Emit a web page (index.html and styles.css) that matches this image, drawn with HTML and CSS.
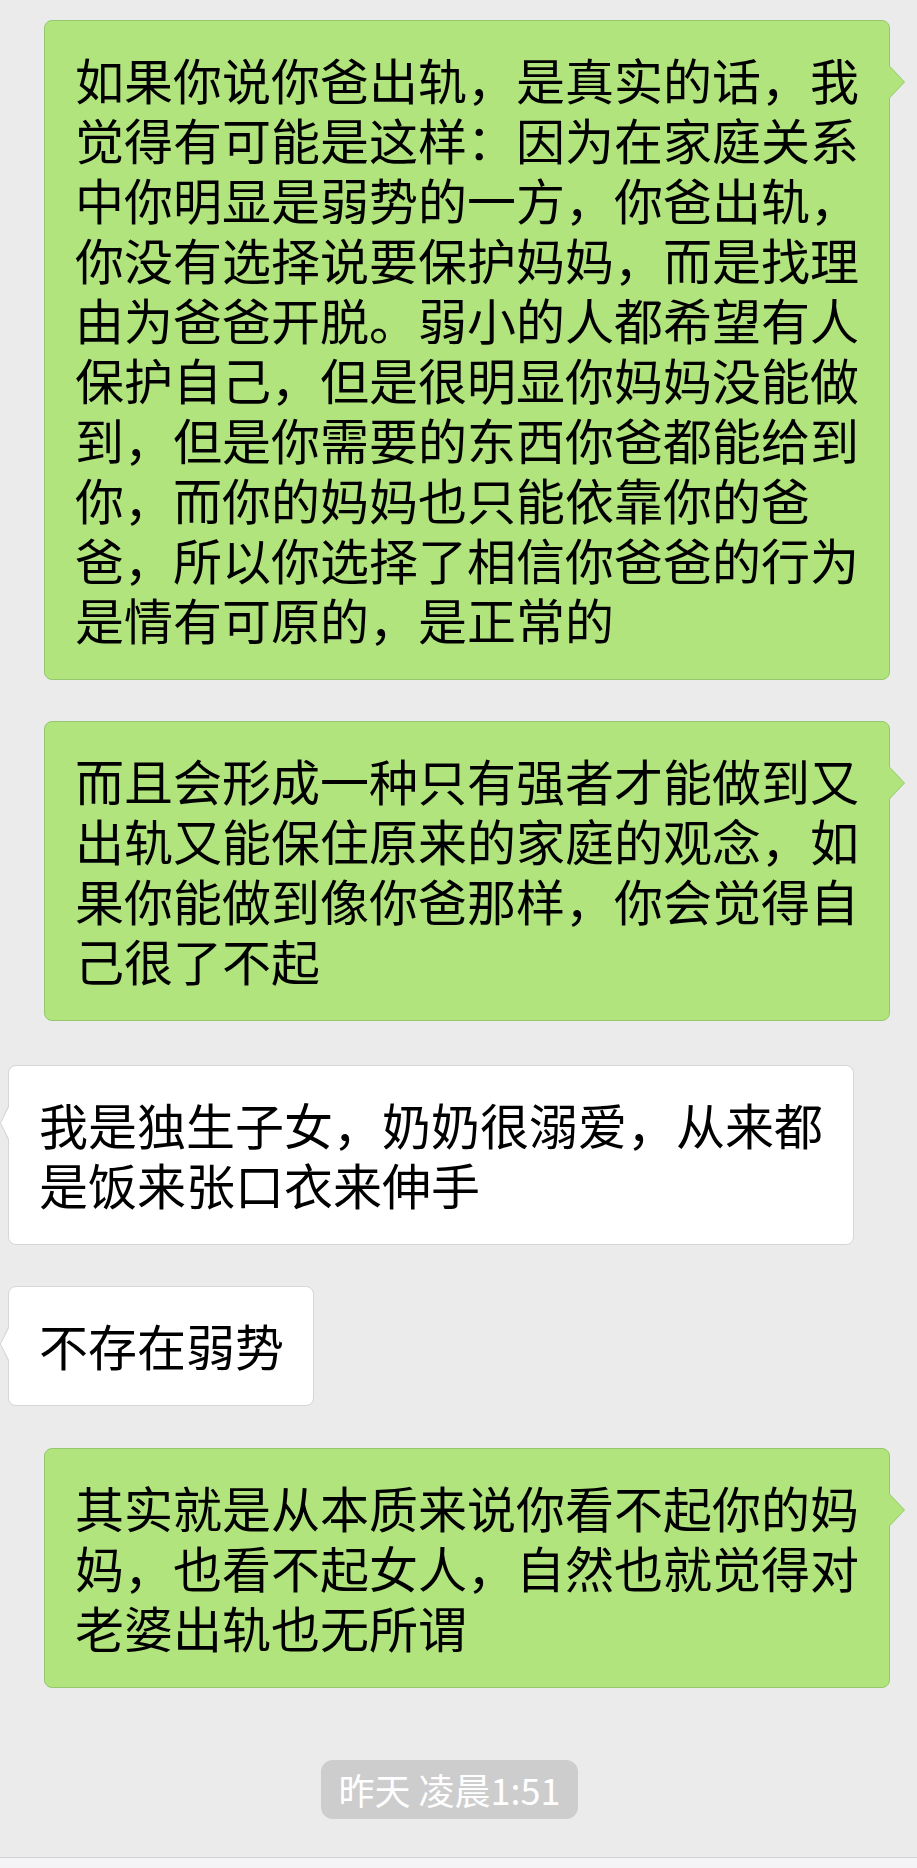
FILE: index.html
```html
<!DOCTYPE html>
<html lang="zh-CN">
<head>
<meta charset="utf-8">
<title>聊天记录</title>
<link rel="stylesheet" href="styles.css">
</head>
<body>
<main class="chat">
  <div class="row row-out">
    <div class="msg msg-out">如果你说你爸出轨，是真实的话，我觉得有可能是这样：因为在家庭关系中你明显是弱势的一方，你爸出轨，你没有选择说要保护妈妈，而是找理由为爸爸开脱。弱小的人都希望有人保护自己，但是很明显你妈妈没能做到，但是你需要的东西你爸都能给到你，而你的妈妈也只能依靠你的爸爸，所以你选择了相信你爸爸的行为是情有可原的，是正常的</div>
  </div>
  <div class="row row-out">
    <div class="msg msg-out">而且会形成一种只有强者才能做到又出轨又能保住原来的家庭的观念，如果你能做到像你爸那样，你会觉得自己很了不起</div>
  </div>
  <div class="row row-in row-switch">
    <div class="msg msg-in">我是独生子女，奶奶很溺爱，从来都是饭来张口衣来伸手</div>
  </div>
  <div class="row row-in">
    <div class="msg msg-in">不存在弱势</div>
  </div>
  <div class="row row-out row-switch-out">
    <div class="msg msg-out">其实就是从本质来说你看不起你的妈妈，也看不起女人，自然也就觉得对老婆出轨也无所谓</div>
  </div>
  <div class="time-row">
    <span class="time">昨天 凌晨1:51</span>
  </div>
</main>
<footer class="input-bar"></footer>
</body>
</html>
```

FILE: styles.css
```css
html, body {
  margin: 0;
  padding: 0;
}

body {
  background: #ebebeb;
  font-family: "Noto Sans CJK SC", "Noto Sans", sans-serif;
  color: #000;
  width: 917px;
  height: 1868px;
  overflow: hidden;
  display: flex;
  flex-direction: column;
}

.chat {
  display: flex;
  flex-direction: column;
  gap: 41px;
  padding-top: 20px;
}

.row {
  display: flex;
}

.row-out {
  justify-content: flex-end;
  padding-right: 27px;
}

.row-in {
  justify-content: flex-start;
  padding-left: 8px;
}

.row-switch {
  margin-top: 3px;
}

.row-switch-out {
  margin-top: 1px;
}

.msg {
  position: relative;
  box-sizing: border-box;
  max-width: 846px;
  padding: 28px 29px 30px 30px;
  border: 1px solid;
  border-radius: 8px;
  font-size: 49px;
  line-height: 60px;
  word-break: normal;
}

.msg-out {
  background: #b2e47e;
  border-color: #95c86c;
}

.msg-in {
  background: #ffffff;
  border-color: #d6d6d6;
}

.msg::before,
.msg::after {
  content: "";
  position: absolute;
  width: 0;
  height: 0;
  border-style: solid;
}

.msg-out::before {
  right: -16px;
  top: 44px;
  border-width: 17px 0 17px 16px;
  border-color: transparent transparent transparent #95c86c;
}

.msg-out::after {
  right: -15px;
  top: 45px;
  border-width: 16px 0 16px 15px;
  border-color: transparent transparent transparent #b2e47e;
}

.msg-in::before {
  left: -9px;
  top: 40px;
  border-width: 17px 8px 17px 0;
  border-color: transparent #d6d6d6 transparent transparent;
}

.msg-in::after {
  left: -8px;
  top: 41px;
  border-width: 16px 8px 16px 0;
  border-color: transparent #ffffff transparent transparent;
}

.time-row {
  display: flex;
  justify-content: center;
  margin-top: 31px;
  padding-right: 18px;
}

.time {
  background: #cdcdcd;
  color: #ffffff;
  font-size: 36px;
  line-height: 59px;
  padding: 0 17px;
  border-radius: 12px;
}

.input-bar {
  margin-top: 38px;
  flex: 1;
  background: #f4f4f6;
  border-top: 1px solid #d2d2d2;
}
```
